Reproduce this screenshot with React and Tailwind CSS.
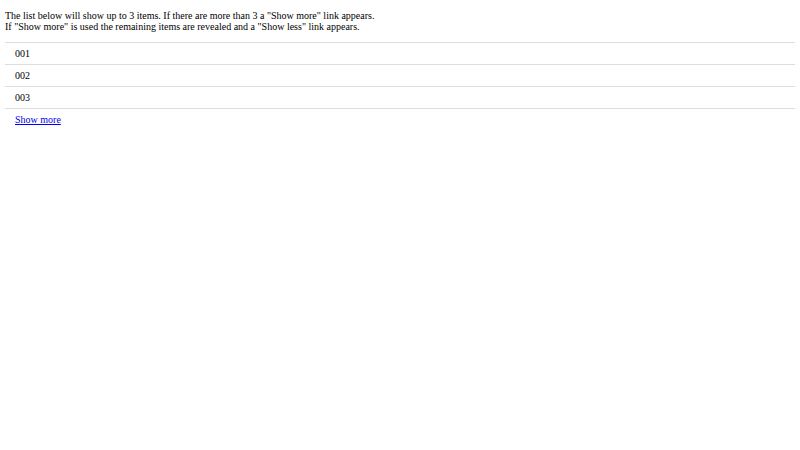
import React, { useState } from "react";

const items = ["001", "002", "003", "004", "005"];

export default function App() {
  const [expanded, setExpanded] = useState(false);
  const visible = expanded ? items : items.slice(0, 3);

  return (
    <div className="p-[5px] pt-[10px] text-[10px] leading-[11px] text-black font-['Liberation_Serif',serif]">
      <p>
        The list below will show up to 3 items. If there are more than 3 a "Show more" link appears.
        <br />
        If "Show more" is used the remaining items are revealed and a "Show less" link appears.
      </p>
      <ul className="mt-[10px] border-b border-[#dddddd]">
        {visible.map((item) => (
          <li key={item} className="h-[22px] border-t border-[#dddddd] pl-[10px] flex items-center">
            {item}
          </li>
        ))}
      </ul>
      <div className="h-[20px] pl-[10px] flex items-center">
        <a
          href="#"
          onClick={(e) => {
            e.preventDefault();
            setExpanded(!expanded);
          }}
          className="text-[#0000ee] underline"
        >
          {expanded ? "Show less" : "Show more"}
        </a>
      </div>
    </div>
  );
}
